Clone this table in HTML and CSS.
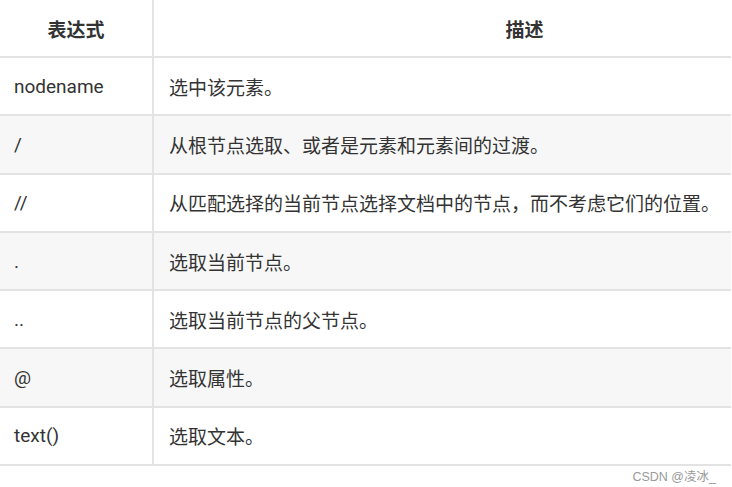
FILE: index.html
```html
<!DOCTYPE html>
<html lang="zh">
<head>
<meta charset="utf-8">
<title>XPath 表达式</title>
<link rel="stylesheet" href="styles.css">
</head>
<body>
<div class="frame">
  <table class="xp">
    <thead>
      <tr><th class="c1">表达式</th><th class="c2">描述</th></tr>
    </thead>
    <tbody>
      <tr><td>nodename</td><td>选中该元素。</td></tr>
      <tr class="alt"><td>/</td><td>从根节点选取、或者是元素和元素间的过渡。</td></tr>
      <tr><td>//</td><td>从匹配选择的当前节点选择文档中的节点，而不考虑它们的位置。</td></tr>
      <tr class="alt"><td>.</td><td>选取当前节点。</td></tr>
      <tr><td>..</td><td>选取当前节点的父节点。</td></tr>
      <tr class="alt"><td>@</td><td>选取属性。</td></tr>
      <tr><td>text()</td><td>选取文本。</td></tr>
    </tbody>
  </table>
</div>
<div class="mark">CSDN @凌冰_</div>
</body>
</html>
```

FILE: styles.css
```css
html, body {
  margin: 0;
  padding: 0;
  background: #fff;
}
body {
  width: 732px;
  height: 487px;
  overflow: hidden;
  position: relative;
  font-family: Roboto, "Noto Sans CJK SC", sans-serif;
  color: #333;
}
.frame {
  width: 731px;
  overflow: hidden;
}
.xp {
  width: 897px;
  border-collapse: collapse;
  table-layout: fixed;
  font-size: 19px;
}
.xp th, .xp td {
  border: 2px solid #e3e3e3;
  padding: 0 14px;
  text-align: left;
  vertical-align: middle;
  white-space: nowrap;
}
.xp th {
  height: 56px;
  border-top: 0;
  font-weight: bold;
  text-align: center;
  color: #333;
}
.xp td {
  height: 56.3px;
}
.xp .c1 {
  width: 124px;
  border-left: 0;
}
.xp td:first-child {
  border-left: 0;
}
.xp td + td {
  padding-left: 15px;
}
.xp tr.alt td {
  background: #f7f7f7;
}
.mark {
  position: absolute;
  right: 16px;
  top: 466px;
  font-family: "Liberation Sans", "Noto Sans CJK SC", sans-serif;
  font-size: 12.5px;
  color: #9a9a9a;
}
```
